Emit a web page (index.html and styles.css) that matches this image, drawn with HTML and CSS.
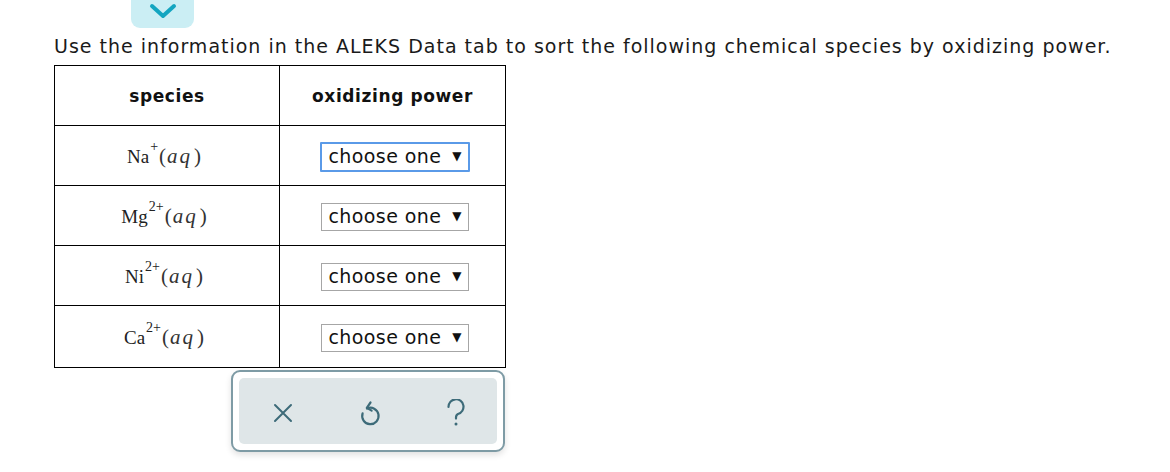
FILE: index.html
```html
<!DOCTYPE html>
<html>
<head>
<meta charset="utf-8">
<link rel="stylesheet" href="styles.css">
</head>
<body>
<div class="page">
  <div class="tab-row">
    <div class="tab">
      <svg width="28" height="16" viewBox="0 0 28 16"><path d="M3 3 L14 13 L25 3" fill="none" stroke="#13a5c0" stroke-width="4" stroke-linecap="round" stroke-linejoin="round"/></svg>
    </div>
  </div>
  <p class="prompt">Use the information in the ALEKS Data tab to sort the following chemical species by oxidizing power.</p>
  <table class="grid">
    <thead>
      <tr><th>species</th><th>oxidizing power</th></tr>
    </thead>
    <tbody>
      <tr>
        <td><span class="chem">Na<sup>+</sup><span class="aq">(<i>aq</i>)</span></span></td>
        <td><span class="sel focus">choose one <span class="arr">▼</span></span></td>
      </tr>
      <tr>
        <td><span class="chem">Mg<sup>2+</sup><span class="aq">(<i>aq</i>)</span></span></td>
        <td><span class="sel">choose one <span class="arr">▼</span></span></td>
      </tr>
      <tr>
        <td><span class="chem">Ni<sup>2+</sup><span class="aq">(<i>aq</i>)</span></span></td>
        <td><span class="sel">choose one <span class="arr">▼</span></span></td>
      </tr>
      <tr class="last">
        <td><span class="chem">Ca<sup>2+</sup><span class="aq">(<i>aq</i>)</span></span></td>
        <td><span class="sel">choose one <span class="arr">▼</span></span></td>
      </tr>
    </tbody>
  </table>
  <div class="tools-row">
    <div class="tools">
      <div class="tools-inner">
        <svg width="20" height="20" viewBox="0 0 20 20"><path d="M2 2 L18 18 M18 2 L2 18" stroke="#3d6b79" stroke-width="2" stroke-linecap="round" fill="none"/></svg>
        <svg width="22" height="26" viewBox="0 0 22 26"><path d="M8 8.5 A8.2 8.2 0 1 1 3.6 13.4" stroke="#3d6b79" stroke-width="2.2" stroke-linecap="round" fill="none"/><path d="M11.5 2.5 L7.8 7.8 L12.6 10.6" stroke="#3d6b79" stroke-width="2.2" stroke-linecap="round" stroke-linejoin="round" fill="none"/></svg>
        <svg width="20" height="28" viewBox="0 0 20 28"><path d="M2.5 8 A7.5 7.5 0 1 1 12 15 C10.4 15.7 10 16.6 10 18.6 L10 19.6" stroke="#3d6b79" stroke-width="2.2" stroke-linecap="round" fill="none"/><circle cx="10" cy="25" r="1.5" fill="#3d6b79"/></svg>
      </div>
    </div>
  </div>
</div>
</body>
</html>
```
FILE: styles.css
```css
html, body {
  margin: 0;
  padding: 0;
  background: #ffffff;
}
.page {
  width: 1170px;
  height: 472px;
  font-family: "DejaVu Sans", Verdana, sans-serif;
  color: #111;
  padding-left: 54px;
  box-sizing: border-box;
}
.tab-row {
  display: flex;
  padding-left: 77px;
}
.tab {
  width: 63px;
  height: 28px;
  background: #cbeef4;
  border-radius: 0 0 9px 9px;
  display: flex;
  align-items: center;
  justify-content: center;
  padding-bottom: 6px;
  box-sizing: border-box;
}
.prompt {
  margin: 5px 0 0 0;
  font-size: 19px;
  letter-spacing: 1px;
  line-height: 26px;
  height: 32px;
  color: #1a1a1a;
}
.grid {
  border-collapse: collapse;
  width: 452px;
}
.grid th, .grid td {
  border: 1px solid #000;
  text-align: center;
  vertical-align: middle;
  padding: 0;
}
.grid th {
  height: 58px;
  font-size: 17px;
  letter-spacing: 0.6px;
  font-weight: bold;
  color: #111;
  padding-top: 1px;
}
.grid th:first-child {
  width: 224px;
}
.grid td {
  height: 59px;
}
.grid tr.last td {
  height: 61px;
}
.chem {
  font-family: "Liberation Serif", "Times New Roman", serif;
  font-size: 19px;
  color: #222;
  position: relative;
  left: -3px;
  top: 1px;
}
.chem sup {
  font-size: 14px;
  vertical-align: 0;
  position: relative;
  top: -12px;
  margin: 0 1px 0 1px;
}
.aq {
  font-size: 21px;
  color: #333;
}
.aq i {
  padding: 0 2px 0 1px;
  letter-spacing: 2px;
}
.sel {
  display: inline-flex;
  align-items: center;
  justify-content: space-between;
  box-sizing: border-box;
  width: 148px;
  height: 28px;
  border: 1px solid #a6a6a6;
  font-size: 19px;
  letter-spacing: 0.4px;
  padding: 0 6px 1px 7px;
  color: #111;
  position: relative;
  left: 2px;
  top: 1px;
}
.sel.focus {
  border: 2px solid #5a9ae8;
  border-radius: 1px;
  width: 150px;
  height: 30px;
  padding: 0 6px 1px 7px;
}
.arr {
  font-size: 12px;
  letter-spacing: 0;
}
.tools-row {
  display: flex;
  padding-left: 177px;
  padding-top: 2px;
}
.tools {
  width: 274px;
  height: 82px;
  box-sizing: border-box;
  border: 2px solid #7e9ba5;
  border-radius: 9px;
  background: #fff;
  padding: 6px;
  box-shadow: 0 3px 6px rgba(0,0,0,0.12);
}
.tools-inner {
  background: #dfe6e8;
  border-radius: 5px;
  height: 100%;
  display: flex;
  align-items: center;
  justify-content: space-between;
  padding: 3px 31px 0 34px;
  box-sizing: border-box;
}
```
